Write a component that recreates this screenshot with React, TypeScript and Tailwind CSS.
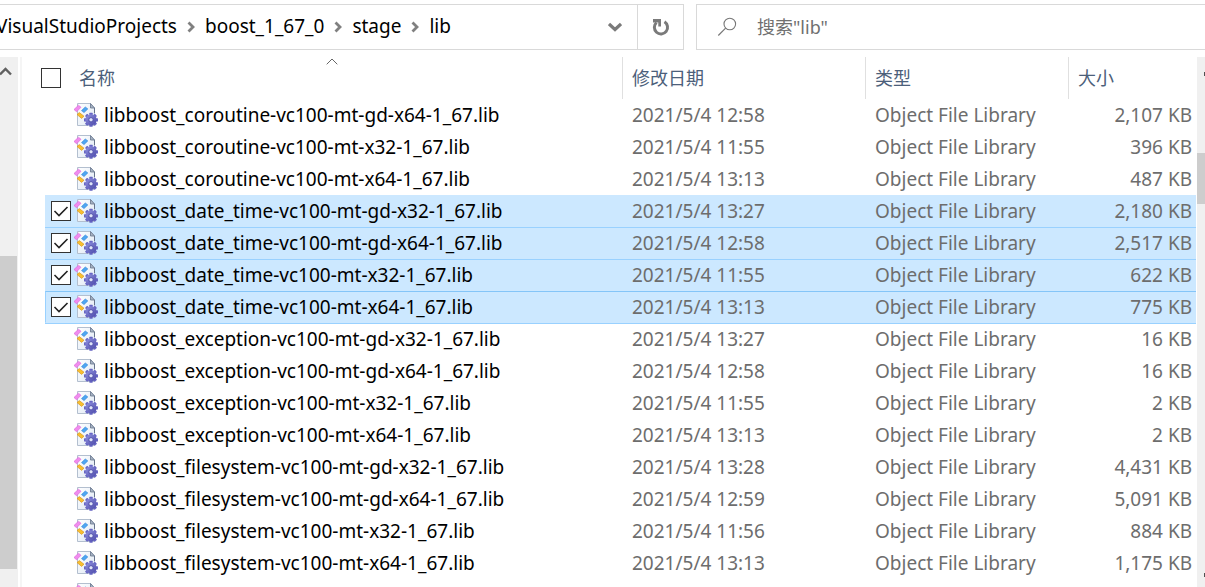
import { useState } from "react";

type FileRow = { name: string; date: string; size: string };

const files: FileRow[] = [
  { name: "libboost_coroutine-vc100-mt-gd-x64-1_67.lib", date: "2021/5/4 12:58", size: "2,107 KB" },
  { name: "libboost_coroutine-vc100-mt-x32-1_67.lib", date: "2021/5/4 11:55", size: "396 KB" },
  { name: "libboost_coroutine-vc100-mt-x64-1_67.lib", date: "2021/5/4 13:13", size: "487 KB" },
  { name: "libboost_date_time-vc100-mt-gd-x32-1_67.lib", date: "2021/5/4 13:27", size: "2,180 KB" },
  { name: "libboost_date_time-vc100-mt-gd-x64-1_67.lib", date: "2021/5/4 12:58", size: "2,517 KB" },
  { name: "libboost_date_time-vc100-mt-x32-1_67.lib", date: "2021/5/4 11:55", size: "622 KB" },
  { name: "libboost_date_time-vc100-mt-x64-1_67.lib", date: "2021/5/4 13:13", size: "775 KB" },
  { name: "libboost_exception-vc100-mt-gd-x32-1_67.lib", date: "2021/5/4 13:27", size: "16 KB" },
  { name: "libboost_exception-vc100-mt-gd-x64-1_67.lib", date: "2021/5/4 12:58", size: "16 KB" },
  { name: "libboost_exception-vc100-mt-x32-1_67.lib", date: "2021/5/4 11:55", size: "2 KB" },
  { name: "libboost_exception-vc100-mt-x64-1_67.lib", date: "2021/5/4 13:13", size: "2 KB" },
  { name: "libboost_filesystem-vc100-mt-gd-x32-1_67.lib", date: "2021/5/4 13:28", size: "4,431 KB" },
  { name: "libboost_filesystem-vc100-mt-gd-x64-1_67.lib", date: "2021/5/4 12:59", size: "5,091 KB" },
  { name: "libboost_filesystem-vc100-mt-x32-1_67.lib", date: "2021/5/4 11:56", size: "884 KB" },
  { name: "libboost_filesystem-vc100-mt-x64-1_67.lib", date: "2021/5/4 13:13", size: "1,175 KB" },
];

const GEAR_ANGLES = [0, 45, 90, 135];

function LibraryIcon() {
  return (
    <svg viewBox="0 0 24 24" className="size-6 shrink-0" aria-hidden="true">
      <defs>
        <linearGradient id="page" x1="0" y1="0" x2="1" y2="1">
          <stop offset="0" stopColor="#ffffff" />
          <stop offset="1" stopColor="#dde7f3" />
        </linearGradient>
        <linearGradient id="gear" x1="0" y1="0" x2="1" y2="1">
          <stop offset="0" stopColor="#9294e2" />
          <stop offset="1" stopColor="#4a48a8" />
        </linearGradient>
      </defs>
      <path d="M3.500.5h13l4 4.500v17.500h-17z" fill="url(#page)" stroke="#b3bfcf" />
      <path d="M20.500 5v5" stroke="#66738a" />
      <path d="M16.500.5l4 4.500h-4z" fill="#a9b5c6" stroke="#66738a" strokeWidth=".8" />
      <path d="M0 6.500 4.500 2.200 7 4.300 2.600 8.800z" fill="#f08cee" stroke="#da5cd8" strokeWidth=".6" />
      <path d="M7.500 7.600 11.300 4 13.800 5.900 10 9.600z" fill="#4ea6f2" stroke="#2b80d4" strokeWidth=".6" />
      <path d="M3 11.500 5.300 9.600 10 13.200 7.600 15.400z" fill="#f8c030" stroke="#d98f10" strokeWidth=".6" />
      <g transform="translate(17 16.800)">
        {GEAR_ANGLES.map((angle) => (
          <rect key={angle} x="-1.600" y="-7" width="3.200" height="14" rx=".5" fill="#6765c4" transform={`rotate(${angle})`} />
        ))}
        <circle r="5.600" fill="url(#gear)" />
        <circle r="2.200" fill="#dfe4f8" stroke="#4f4dab" strokeWidth="1" />
      </g>
    </svg>
  );
}

function Tick({ label, checked, onChange }: { label: string; checked: boolean; onChange: () => void }) {
  return (
    <span className="grid size-5 shrink-0">
      <input
        type="checkbox"
        aria-label={label}
        checked={checked}
        onChange={onChange}
        className="col-start-1 row-start-1 size-5 appearance-none border border-[#333333] bg-white"
      />
      {checked && (
        <svg viewBox="0 0 20 20" className="pointer-events-none col-start-1 row-start-1 size-5" aria-hidden="true">
          <path d="M3.500 10 8 14.500 16.500 6" fill="none" stroke="#222" strokeWidth="1.600" />
        </svg>
      )}
    </span>
  );
}

function Separator() {
  return (
    <svg viewBox="0 0 8 12" className="mt-0.5 h-3 w-2 shrink-0" aria-hidden="true">
      <path d="M1.500 1.500 6 6 1.500 10.500" fill="none" stroke="#808080" strokeWidth="2.800" />
    </svg>
  );
}

function AddressBar() {
  return (
    <div className="flex h-[46px] w-[684px] shrink-0 border border-l-0 border-[#d9d9d9]">
      <nav aria-label="Path" className="flex min-w-0 flex-1 items-center gap-2.5 pb-0.5 text-black">
        <a href="#projects" className="-ml-1">VisualStudioProjects</a>
        <Separator />
        <a href="#boost">boost_1_67_0</a>
        <Separator />
        <a href="#stage">stage</a>
        <Separator />
        <a href="#lib">lib</a>
      </nav>
      <button type="button" aria-label="Previous locations" className="grid w-11 place-items-center">
        <svg viewBox="0 0 14 10" className="h-2.5 w-3.5" aria-hidden="true">
          <path d="M1 2 7 7.500 13 2" fill="none" stroke="#7a7a7a" strokeWidth="3.200" />
        </svg>
      </button>
      <button type="button" aria-label="Refresh" className="grid w-[46px] place-items-center border-l border-[#d9d9d9]">
        <svg viewBox="0 0 18 18" className="size-[18px]" aria-hidden="true">
          <path d="M12.500 3.800A6.600 6.600 0 1 1 4.500 4.500" fill="none" stroke="#7a7a7a" strokeWidth="3" />
          <path d="M1 1H9V8.500H6.300V4.500H1z" fill="#7a7a7a" />
        </svg>
      </button>
    </div>
  );
}

function SearchBox() {
  return (
    <label className="flex h-[46px] min-w-0 flex-1 items-center gap-5 border border-r-0 border-[#d9d9d9] pl-5">
      <svg viewBox="0 0 20 20" className="size-5 shrink-0" aria-hidden="true">
        <circle cx="12.800" cy="7" r="5.800" fill="none" stroke="#777" strokeWidth="1.100" />
        <path d="M8.600 11.200 1.300 18.500" stroke="#777" strokeWidth="1.200" />
      </svg>
      <input
        type="text"
        aria-label="搜索"
        placeholder={'搜索"lib"'}
        className="min-w-0 flex-1 bg-transparent text-lg outline-none placeholder:text-[#707070]"
      />
    </label>
  );
}

function TreeScrollbar() {
  return (
    <div className="flex w-[18px] shrink-0 flex-col bg-[#f0f0f0]">
      <svg viewBox="0 0 18 30" className="h-[30px] w-[18px] shrink-0" aria-hidden="true">
        <path d="M0 17.500 5.500 12 11 17.500" fill="none" stroke="#606060" strokeWidth="2.400" />
      </svg>
      <div className="mt-[169px] mr-px h-[313px] shrink-0 bg-[#cdcdcd]" />
    </div>
  );
}

function ListScrollbar() {
  return (
    <div className="flex w-2 shrink-0 flex-col bg-[#f0f0f0]">
      <svg viewBox="0 0 8 30" className="h-[30px] w-2 shrink-0" aria-hidden="true">
        <path d="M7 15h1v4h-1z" fill="#505050" />
      </svg>
      <div className="mt-[66px] h-[51px] shrink-0 bg-[#cdcdcd]" />
      <svg viewBox="0 0 8 30" className="mt-auto h-[30px] w-2 shrink-0" aria-hidden="true">
        <path d="M7 16h1v4h-1z" fill="#505050" />
      </svg>
    </div>
  );
}

export default function App() {
  const [selected, setSelected] = useState<number[]>([3, 4, 5, 6]);
  const toggle = (i: number) =>
    setSelected((s) => (s.includes(i) ? s.filter((n) => n !== i) : [...s, i].sort((a, b) => a - b)));
  const all = selected.length === files.length;
  const last = selected[selected.length - 1];

  const edge = (i: number) => {
    if (i === last) return "border-t-[#84c5f8]";
    return selected.includes(i - 1) ? "border-t-[#99d1ff]" : "border-t-transparent";
  };

  return (
    <div className="flex h-screen flex-col overflow-hidden bg-white pt-1 font-['Noto_Sans','Noto_Sans_CJK_SC',sans-serif] text-[19px] leading-6">
      <header className="flex shrink-0 gap-3">
        <AddressBar />
        <SearchBox />
      </header>
      <main className="mt-[7px] flex min-h-0 flex-1">
        <TreeScrollbar />
        <div className="ml-0.5 w-0.5 shrink-0 bg-[#f5f5f5]" />
        <div className="min-w-0 flex-1 overflow-hidden pr-px">
          <table className="w-full table-fixed border-separate border-spacing-0 whitespace-nowrap">
            <colgroup>
              <col className="w-[23px]" />
              <col />
              <col className="w-[243px]" />
              <col className="w-[203px]" />
              <col className="w-[128px]" />
            </colgroup>
            <thead>
              <tr className="h-[42px] text-left text-lg leading-6 text-[#4c607a]">
                <th colSpan={2} className="relative p-0 pl-[19px] font-normal">
                  <span className="flex items-center gap-[18px]">
                    <Tick label="Select all" checked={all} onChange={() => setSelected(all ? [] : files.map((_, i) => i))} />
                    名称
                  </span>
                  <svg viewBox="0 0 12 7" className="absolute top-px left-1/2 ml-1 h-[7px] w-3" aria-hidden="true">
                    <path d="M.7 6.300 6 1 11.300 6.300" fill="none" stroke="#666" />
                  </svg>
                </th>
                <th className="border-l border-[#e0e0e0] p-0 pl-[9px] font-normal">修改日期</th>
                <th className="border-l border-[#e0e0e0] p-0 pl-[9px] font-normal">类型</th>
                <th className="border-l border-[#e0e0e0] p-0 pl-[9px] font-normal">大小</th>
              </tr>
            </thead>
            <tbody>
              {files.map((file, i) => {
                const on = selected.includes(i);
                const cell = `border-y border-b-transparent ${on ? "bg-[#cce8ff]" : ""} ${edge(i)}`;
                return (
                  <tr key={file.name} className="h-8 text-[#6d6d6d]">
                    <td className="p-0" />
                    <td className={`p-0 text-black ${cell} ${i === last ? "border-l border-l-[#99d1ff] pl-[5px]" : "pl-1.5"}`}>
                      <span className="flex items-center">
                        {on ? <Tick label={file.name} checked onChange={() => toggle(i)} /> : <span className="w-5" />}
                        <button type="button" onClick={() => toggle(i)} className="ml-[3px] flex items-center gap-1.5">
                          <LibraryIcon />
                          {file.name}
                        </button>
                      </span>
                    </td>
                    <td className={`p-0 pl-2.5 ${cell}`}>{file.date}</td>
                    <td className={`p-0 pl-2.5 ${cell}`}>Object File Library</td>
                    <td className={`p-0 pr-1 text-right ${cell}`}>{file.size}</td>
                  </tr>
                );
              })}
              <tr className="h-8">
                <td className="p-0" />
                <td className="p-0 pl-[29px]">
                  <LibraryIcon />
                </td>
              </tr>
            </tbody>
          </table>
        </div>
        <ListScrollbar />
      </main>
    </div>
  );
}
